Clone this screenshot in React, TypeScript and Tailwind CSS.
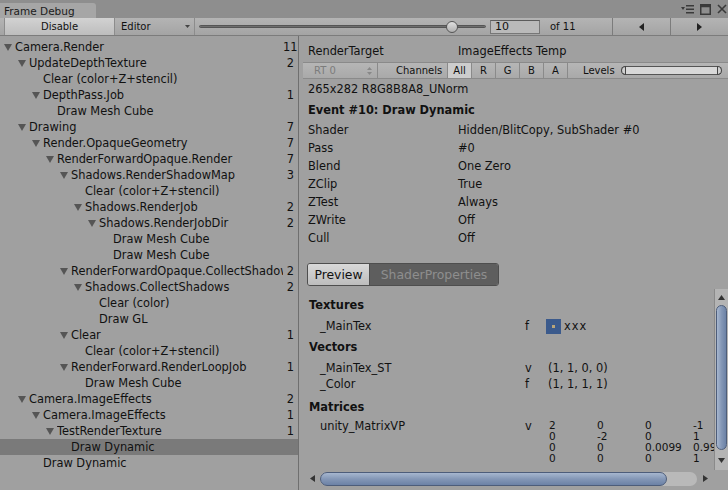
import React from 'react';

type Row = { l: number; t: string; c?: string; tri?: boolean; sel?: boolean };

const rows: Row[] = [
  { l: 0, t: 'Camera.Render', c: '11', tri: true },
  { l: 1, t: 'UpdateDepthTexture', c: '2', tri: true },
  { l: 2, t: 'Clear (color+Z+stencil)' },
  { l: 2, t: 'DepthPass.Job', c: '1', tri: true },
  { l: 3, t: 'Draw Mesh Cube' },
  { l: 1, t: 'Drawing', c: '7', tri: true },
  { l: 2, t: 'Render.OpaqueGeometry', c: '7', tri: true },
  { l: 3, t: 'RenderForwardOpaque.Render', c: '7', tri: true },
  { l: 4, t: 'Shadows.RenderShadowMap', c: '3', tri: true },
  { l: 5, t: 'Clear (color+Z+stencil)' },
  { l: 5, t: 'Shadows.RenderJob', c: '2', tri: true },
  { l: 6, t: 'Shadows.RenderJobDir', c: '2', tri: true },
  { l: 7, t: 'Draw Mesh Cube' },
  { l: 7, t: 'Draw Mesh Cube' },
  { l: 4, t: 'RenderForwardOpaque.CollectShadows', c: '2', tri: true },
  { l: 5, t: 'Shadows.CollectShadows', c: '2', tri: true },
  { l: 6, t: 'Clear (color)' },
  { l: 6, t: 'Draw GL' },
  { l: 4, t: 'Clear', c: '1', tri: true },
  { l: 5, t: 'Clear (color+Z+stencil)' },
  { l: 4, t: 'RenderForward.RenderLoopJob', c: '1', tri: true },
  { l: 5, t: 'Draw Mesh Cube' },
  { l: 1, t: 'Camera.ImageEffects', c: '2', tri: true },
  { l: 2, t: 'Camera.ImageEffects', c: '1', tri: true },
  { l: 3, t: 'TestRenderTexture', c: '1', tri: true },
  { l: 4, t: 'Draw Dynamic', sel: true },
  { l: 2, t: 'Draw Dynamic' },
];

const spacers = ['w-[4px]', 'w-[18px]', 'w-[32px]', 'w-[46px]', 'w-[60px]', 'w-[74px]', 'w-[88px]', 'w-[102px]'];

const props: [string, string][] = [
  ['Shader', 'Hidden/BlitCopy, SubShader #0'],
  ['Pass', '#0'],
  ['Blend', 'One Zero'],
  ['ZClip', 'True'],
  ['ZTest', 'Always'],
  ['ZWrite', 'Off'],
  ['Cull', 'Off'],
];

const matrix = [
  ['2', '0', '0', '-1'],
  ['0', '-2', '0', '1'],
  ['0', '0', '0.0099', '0.9901'],
  ['0', '0', '0', '1'],
];

function Tri() {
  return (
    <svg width="8" height="7" viewBox="0 0 8 7" className="shrink-0">
      <polygon points="0,0 8,0 4,7" fill="#555555" />
    </svg>
  );
}

function TreeRow({ r }: { r: Row }) {
  return (
    <div className={`flex h-[16px] items-center ${r.sel ? 'bg-[#7a7a7a]' : ''}`}>
      <div className={`${spacers[r.l]} shrink-0`} />
      <div className="flex w-[11px] shrink-0 items-center">{r.tri ? <Tri /> : null}</div>
      <div className="min-w-0 flex-1 overflow-hidden whitespace-nowrap">{r.t}</div>
      <div className="w-[15px] shrink-0 pr-[4px] text-right">{r.c ?? ''}</div>
    </div>
  );
}

function ChanBtn({ label, on }: { label: string; on?: boolean }) {
  return (
    <div
      className={`flex h-full w-[24px] items-center justify-center border-r border-[#8a8a8a] ${
        on ? 'bg-[#cdcdcd]' : ''
      }`}
    >
      {label}
    </div>
  );
}

export default function App() {
  return (
    <div className="flex h-[490px] w-[728px] flex-col overflow-hidden bg-[#a0a0a0] font-['DejaVu_Sans',sans-serif] text-[11.4px] leading-[14px] text-[#111]">
      {/* title bar */}
      <div className="flex h-[18px] shrink-0 items-end bg-[#8e8e8e]">
        <div className="flex h-[15px] w-[96px] items-center rounded-tr-[3px] bg-[#a6a6a6] pl-[4px] text-[10.5px] text-[#1c1c1c]">
          Frame Debug
        </div>
        <div className="flex-1" />
        <div className="flex h-[18px] items-center gap-[6px] pr-[1px]">
          <svg width="13" height="10" viewBox="0 0 13 10">
            <polygon points="0,3 4,3 2,6" fill="#3a3a3a" />
            <rect x="5" y="1" width="8" height="1.5" fill="#3a3a3a" />
            <rect x="5" y="4.5" width="8" height="1.5" fill="#3a3a3a" />
            <rect x="5" y="8" width="8" height="1.5" fill="#3a3a3a" />
          </svg>
          <svg width="11" height="11" viewBox="0 0 11 11">
            <rect x="0.75" y="0.75" width="9.5" height="9.5" fill="none" stroke="#3a3a3a" strokeWidth="1.5" />
            <rect x="0.75" y="0.75" width="9.5" height="2.5" fill="#3a3a3a" />
          </svg>
          <svg width="10" height="10" viewBox="0 0 10 10">
            <path d="M1 1 L9 9 M9 1 L1 9" stroke="#3a3a3a" strokeWidth="1.6" />
          </svg>
        </div>
      </div>

      {/* toolbar */}
      <div className="flex h-[18px] shrink-0 items-center border-b border-[#7c7c7c] bg-gradient-to-b from-[#b4b4b4] to-[#a4a4a4] text-[10px]">
        <div className="w-[4px]" />
        <div className="flex h-full w-[111px] items-center justify-center border-x border-[#8c8c8c] bg-gradient-to-b from-[#d2d2d2] to-[#bdbdbd]">
          Disable
        </div>
        <div className="relative flex h-full w-[80px] items-center border-r border-[#8c8c8c] pl-[6px]">
          Editor
          <svg width="5" height="3" viewBox="0 0 5 3" className="absolute right-[4px] top-[7px]">
            <polygon points="0,0 5,0 2.5,3" fill="#444" />
          </svg>
        </div>
        <div className="relative ml-[4px] h-full w-[287px]">
          <div className="absolute left-0 right-0 top-[7px] h-[3px] rounded-full border border-[#555] bg-[#6e6e6e]" />
          <div className="absolute left-[247px] top-[3px] h-[12px] w-[12px] rounded-full border border-[#555] bg-gradient-to-b from-[#e0e0e0] to-[#b0b0b0]" />
        </div>
        <div className="ml-[4px] flex h-[14px] w-[50px] items-center border border-[#777] border-t-[#5c5c5c] bg-[#bababa] pl-[4px] text-[11px]">
          10
        </div>
        <div className="ml-[10px] w-[62px]">of 11</div>
        <div className="flex h-full w-[58px] items-center justify-center border-l border-[#7c7c7c]">
          <svg width="5" height="8" viewBox="0 0 5 8">
            <polygon points="5,0 5,8 0,4" fill="#222" />
          </svg>
        </div>
        <div className="flex h-full flex-1 items-center justify-center border-l border-[#7c7c7c]">
          <svg width="5" height="8" viewBox="0 0 5 8">
            <polygon points="0,0 0,8 5,4" fill="#222" />
          </svg>
        </div>
      </div>

      {/* body */}
      <div className="flex min-h-0 flex-1">
        {/* tree */}
        <div className="w-[299px] shrink-0 border-r border-[#6f6f6f] pt-[3px]">
          {rows.map((r, i) => (
            <TreeRow key={i} r={r} />
          ))}
        </div>

        {/* right panel */}
        <div className="flex min-w-0 flex-1 flex-col">
          <div className="mt-[7px] flex h-[16px] items-center pl-[9px]">
            <div className="w-[150px]">RenderTarget</div>
            <div>ImageEffects Temp</div>
          </div>

          <div className="ml-[4px] mt-[3px] flex h-[17px] items-center border-y border-[#8a8a8a] bg-gradient-to-b from-[#b6b6b6] to-[#a9a9a9] text-[10px]">
            <div className="relative flex h-full w-[75px] items-center border-r border-[#8a8a8a] pl-[11px] text-[#7c7c7c]">
              RT 0
              <svg width="5" height="8" viewBox="0 0 5 8" className="absolute right-[5px] top-[4px]">
                <polygon points="0,3 5,3 2.5,0" fill="#888" />
                <polygon points="0,5 5,5 2.5,8" fill="#888" />
              </svg>
            </div>
            <div className="flex h-full w-[70px] items-center border-r border-[#8a8a8a] pl-[18px]">Channels</div>
            <ChanBtn label="All" on />
            <ChanBtn label="R" />
            <ChanBtn label="G" />
            <ChanBtn label="B" />
            <ChanBtn label="A" />
            <div className="pl-[15px]">Levels</div>
            <div className="relative ml-[6px] h-[9px] w-[101px] rounded-full border border-[#555] bg-[#d8d8d8]">
              <div className="absolute left-[-1px] top-[-1px] h-[9px] w-[5px] rounded-l-full border border-[#444] bg-[#cfcfcf]" />
              <div className="absolute right-[-1px] top-[-1px] h-[9px] w-[5px] rounded-r-full border border-[#444] bg-[#cfcfcf]" />
            </div>
          </div>

          <div className="mt-[2px] flex h-[16px] items-center pl-[9px]">265x282 R8G8B8A8_UNorm</div>
          <div className="mt-[5px] flex h-[16px] items-center pl-[9px] font-bold">Event #10: Draw Dynamic</div>

          <div className="mt-[3px]">
            {props.map(([k, v]) => (
              <div key={k} className="flex h-[18px] items-center pl-[9px]">
                <div className="w-[150px]">{k}</div>
                <div>{v}</div>
              </div>
            ))}
          </div>

          <div className="ml-[8px] mt-[16px] flex h-[23px] w-[192px] overflow-hidden rounded-[3px] border border-[#4e4e4e] text-[12.4px]">
            <div className="flex w-[62px] items-center justify-center border-r border-[#4e4e4e] bg-gradient-to-b from-[#d9d9d9] to-[#bdbdbd]">
              Preview
            </div>
            <div className="flex flex-1 items-center justify-center bg-[#5e5e5e] text-[#8e8e8e]">ShaderProperties</div>
          </div>

          {/* scroll view */}
          <div className="mt-[3px] flex min-h-0 flex-1">
            <div className="min-w-0 flex-1 overflow-hidden pl-[10px]">
              <div className="mt-[8px] flex h-[16px] items-center font-bold">Textures</div>
              <div className="mt-[5px] flex h-[16px] items-center">
                <div className="w-[216px] shrink-0 pl-[11px]">_MainTex</div>
                <div className="w-[23px] shrink-0">f</div>
                <div className="-ml-[2px] flex h-[15px] w-[15px] items-center justify-center bg-[#3b5a8c]">
                  <div className="h-[3px] w-[3px] bg-[#b9a57a]" />
                </div>
                <div className="ml-[3px] tracking-[1px]">xxx</div>
              </div>
              <div className="mt-[5px] flex h-[16px] items-center font-bold">Vectors</div>
              <div className="mt-[5px] flex h-[16px] items-center">
                <div className="w-[216px] shrink-0 pl-[11px]">_MainTex_ST</div>
                <div className="w-[23px] shrink-0">v</div>
                <div className="whitespace-nowrap">(1, 1, 0, 0)</div>
              </div>
              <div className="flex h-[16px] items-center">
                <div className="w-[216px] shrink-0 pl-[11px]">_Color</div>
                <div className="w-[23px] shrink-0">f</div>
                <div className="whitespace-nowrap">(1, 1, 1, 1)</div>
              </div>
              <div className="mt-[7px] flex h-[16px] items-center font-bold">Matrices</div>
              <div className="mt-[5px] flex">
                <div className="w-[216px] shrink-0 pl-[11px] leading-[12px]">unity_MatrixVP</div>
                <div className="w-[24px] shrink-0 leading-[12px]">v</div>
                <div className="flex flex-col text-[10.5px]">
                  {matrix.map((m, i) => (
                    <div key={i} className="flex h-[11px] items-center whitespace-nowrap leading-[11px]">
                      {m.map((v, j) => (
                        <div key={j} className="w-[48px] shrink-0">
                          {v}
                        </div>
                      ))}
                    </div>
                  ))}
                </div>
              </div>
            </div>

            {/* vertical scrollbar */}
            <div className="flex w-[14px] shrink-0 flex-col border-l border-[#8a8a8a] bg-[#b4b4b4]">
              <div className="flex h-[16px] items-center justify-center">
                <svg width="7" height="5" viewBox="0 0 7 5">
                  <polygon points="0,5 7,5 3.5,0" fill="#333" />
                </svg>
              </div>
              <div className="mx-[1px] h-[145px] rounded-full border border-[#4d5d7a] bg-gradient-to-r from-[#a7b7cf] via-[#8497b6] to-[#6c82a6]" />
              <div className="flex flex-1 items-center justify-center">
                <svg width="7" height="5" viewBox="0 0 7 5">
                  <polygon points="0,0 7,0 3.5,5" fill="#333" />
                </svg>
              </div>
            </div>
          </div>

          {/* horizontal scrollbar */}
          <div className="flex h-[17px] shrink-0 items-center">
            <div className="flex w-[20px] items-center justify-center pl-[6px]">
              <svg width="5" height="7" viewBox="0 0 5 7">
                <polygon points="5,0 5,7 0,3.5" fill="#333" />
              </svg>
            </div>
            <div className="ml-[1px] h-[14px] w-[377px] rounded-full bg-[#b9b9b9]">
              <div className="h-[14px] w-[347px] rounded-full border border-[#4d5d7a] bg-gradient-to-b from-[#a7b7cf] via-[#8497b6] to-[#6c82a6]" />
            </div>
            <div className="flex w-[16px] items-center justify-center">
              <svg width="5" height="7" viewBox="0 0 5 7">
                <polygon points="0,0 0,7 5,3.5" fill="#333" />
              </svg>
            </div>
          </div>
          <div className="h-[3px] shrink-0" />
        </div>
      </div>
    </div>
  );
}
